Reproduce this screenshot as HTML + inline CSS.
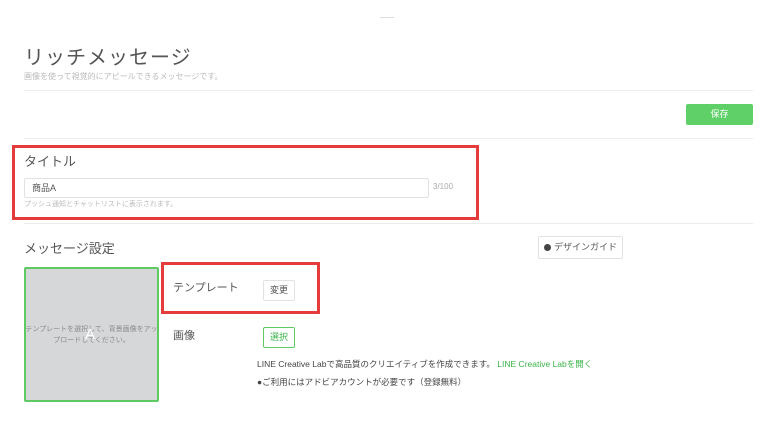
<!DOCTYPE html>
<html><head><meta charset="utf-8"><style>
*{margin:0;padding:0;box-sizing:border-box}
body{width:768px;height:432px;background:#fff;position:relative;overflow:hidden;font-family:"Liberation Sans","Noto Sans CJK JP",sans-serif;color:#333}
.a{position:absolute;white-space:nowrap}
.line{position:absolute;height:1px;background:#ececec}
.btn{position:absolute;border:1px solid #e2e2e2;background:#fff;font-size:9px;text-align:center;border-radius:2px}
</style></head><body>
<div class="a" style="left:380px;top:17px;width:14px;height:1px;background:#ddd"></div>
<div class="a" style="left:24px;top:41px;font-size:20px;color:#555;letter-spacing:1px">リッチメッセージ</div>
<div class="a" style="left:24px;top:71px;font-size:8px;color:#bbb">画像を使って視覚的にアピールできるメッセージです。</div>
<div class="line" style="left:24px;top:90px;width:729px"></div>
<div class="a" style="left:686px;top:104px;width:67px;height:21px;background:#5fd068;border-radius:2px;color:#fff;font-size:9px;text-align:center;line-height:21px">保存</div>
<div class="line" style="left:24px;top:138px;width:729px"></div>
<div class="a" style="left:12px;top:145px;width:467px;height:75px;border:3px solid #e53b3b"></div>
<div class="a" style="left:24px;top:151px;font-size:13px;color:#555">タイトル</div>
<div class="a" style="left:24px;top:178px;width:405px;height:20px;border:1px solid #e2e2e2;border-radius:2px;font-size:9px;line-height:18px;padding-left:7px;color:#555">商品A</div>
<div class="a" style="left:433px;top:182px;font-size:8px;color:#aaa">3/100</div>
<div class="a" style="left:24px;top:199px;font-size:7px;color:#bbb">プッシュ通知とチャットリストに表示されます。</div>
<div class="line" style="left:24px;top:223px;width:729px"></div>
<div class="a" style="left:24px;top:238px;font-size:13px;color:#555">メッセージ設定</div>
<div class="btn" style="left:538px;top:236px;width:85px;height:23px;line-height:21px;color:#555"><span style="display:inline-block;width:7px;height:7px;border-radius:50%;background:#444;vertical-align:-1px;margin-right:3px"></span>デザインガイド</div>
<div class="a" style="left:24px;top:267px;width:135px;height:135px;background:#d6d7d9;border:2px solid #5fc964;border-radius:2px"></div>
<div class="a" style="left:24px;top:324px;width:135px;text-align:center;font-size:7px;color:#8a8a8a;white-space:normal;line-height:11px">テンプレートを選択して、背景画像をアップロードしてください。</div>
<div class="a" style="left:85px;top:326px;font-size:15px;color:#fff">A</div>
<div class="a" style="left:161px;top:262px;width:159px;height:52px;border:3px solid #e53b3b"></div>
<div class="a" style="left:173px;top:279px;font-size:11px;color:#555">テンプレート</div>
<div class="btn" style="left:263px;top:280px;width:32px;height:21px;line-height:19px;color:#555">変更</div>
<div class="a" style="left:173px;top:327px;font-size:11px;color:#555">画像</div>
<div class="btn" style="left:263px;top:327px;width:32px;height:21px;line-height:19px;color:#3ab449;border-color:#5fc964">選択</div>
<div class="a" style="left:257px;top:358px;font-size:8.5px;color:#444">LINE Creative Labで高品質のクリエイティブを作成できます。 <span style="color:#3ab449">LINE Creative Labを開く</span></div>
<div class="a" style="left:257px;top:376px;font-size:8.5px;color:#444">●ご利用にはアドビアカウントが必要です（登録無料）</div>
</body></html>
